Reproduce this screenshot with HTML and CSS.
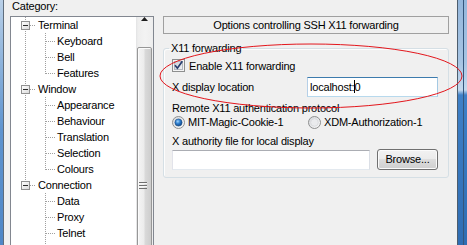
FILE: index.html
```html
<!DOCTYPE html>
<html>
<head>
<meta charset="utf-8">
<title>PuTTY Configuration - X11</title>
<link rel="stylesheet" href="styles.css">
</head>
<body>
<div class="window">
  <div class="edge-left"></div>
  <div class="client">
    <div class="left-col">
      <div class="cat-label">Category:</div>
      <div class="tree">
        <ul class="tree-list">
          <li class="node n-root"><span class="expander"></span><span class="root-label">Terminal</span></li>
          <li class="node n-child">Keyboard</li>
          <li class="node n-child">Bell</li>
          <li class="node n-child-last">Features</li>
          <li class="node n-root"><span class="expander"></span><span class="root-label">Window</span></li>
          <li class="node n-child">Appearance</li>
          <li class="node n-child">Behaviour</li>
          <li class="node n-child">Translation</li>
          <li class="node n-child">Selection</li>
          <li class="node n-child-last">Colours</li>
          <li class="node n-root-last"><span class="expander"></span><span class="root-label">Connection</span></li>
          <li class="node n-child-nr">Data</li>
          <li class="node n-child-nr">Proxy</li>
          <li class="node n-child-nr">Telnet</li>
          <li class="node n-child-nr">Rlogin</li>
        </ul>
        <div class="vscroll">
          <div class="sb-up">
            <svg width="7" height="4" viewBox="0 0 7 4"><path d="M0 4 L3.5 0 L7 4 Z" fill="#1e1e1e"/></svg>
          </div>
          <div class="sb-track">
            <div class="sb-thumb"><div class="sb-grip"></div></div>
          </div>
        </div>
      </div>
    </div>
    <div class="right-col">
      <div class="panel-title">Options controlling SSH X11 forwarding</div>
      <fieldset class="group">
        <legend>X11 forwarding</legend>
        <div class="check-row">
          <svg class="checkbox" width="13" height="13" viewBox="0 0 13 13">
            <defs>
              <linearGradient id="cbg" x1="0" y1="0" x2="1" y2="1">
                <stop offset="0" stop-color="#c9ced6"/>
                <stop offset="1" stop-color="#f4f5f7"/>
              </linearGradient>
            </defs>
            <rect x="0.5" y="0.5" width="12" height="12" fill="#f4f4f4" stroke="#8e8f8f"/>
            <rect x="2.5" y="2.5" width="8" height="8" fill="url(#cbg)" stroke="#b2b7bf"/>
            <path d="M3 6.2 L5.4 9.2 L10.3 2.2" fill="none" stroke="#283d6e" stroke-width="1.7"/>
          </svg>
          <span>Enable X11 forwarding</span>
        </div>
        <div class="field-row">
          <span>X display location</span>
          <div class="textbox focused">localhost:<span class="caret"></span>0</div>
        </div>
        <div class="text-row">Remote X11 authentication protocol</div>
        <div class="radio-row">
          <div class="radio-opt">
            <svg class="radio" width="13" height="13" viewBox="0 0 13 13">
              <defs>
                <linearGradient id="rbg" x1="0" y1="0" x2="1" y2="1">
                  <stop offset="0" stop-color="#d4d6da"/>
                  <stop offset="1" stop-color="#fbfbfb"/>
                </linearGradient>
                <radialGradient id="rdot" cx="0.4" cy="0.35" r="0.7">
                  <stop offset="0" stop-color="#9fd4fb"/>
                  <stop offset="0.45" stop-color="#2f7fd0"/>
                  <stop offset="1" stop-color="#0b3f7c"/>
                </radialGradient>
              </defs>
              <circle cx="6.5" cy="6.5" r="6" fill="url(#rbg)" stroke="#8e8f8f"/>
              <circle cx="6.5" cy="6.5" r="3.6" fill="url(#rdot)" stroke="#1c4f86" stroke-width="0.6"/>
            </svg>
            <span>MIT-Magic-Cookie-1</span>
          </div>
          <div class="radio-opt">
            <svg class="radio" width="13" height="13" viewBox="0 0 13 13">
              <defs>
                <linearGradient id="rbg2" x1="0" y1="0" x2="1" y2="1">
                  <stop offset="0" stop-color="#d4d6da"/>
                  <stop offset="1" stop-color="#fbfbfb"/>
                </linearGradient>
              </defs>
              <circle cx="6.5" cy="6.5" r="6" fill="url(#rbg2)" stroke="#8e8f8f"/>
              <circle cx="6.5" cy="6.5" r="3.8" fill="#eaebed" stroke="#d0d2d5" stroke-width="0.6"/>
            </svg>
            <span>XDM-Authorization-1</span>
          </div>
        </div>
        <div class="text-row second">X authority file for local display</div>
        <div class="file-row">
          <div class="textbox file"></div>
          <div class="button">Browse...</div>
        </div>
      </fieldset>
    </div>
  </div>
  <div class="edge-right"></div>
</div>
<svg class="annotation" width="467" height="245" viewBox="0 0 467 245">
  <ellipse cx="311" cy="76" rx="151" ry="32" fill="none" stroke="#e3161c" stroke-width="1"/>
</svg>
</body>
</html>
```

FILE: styles.css
```css
html, body {
  margin: 0;
  padding: 0;
}

body {
  width: 467px;
  height: 245px;
  overflow: hidden;
  position: relative;
  background: #f0f0f0;
  font-family: "Liberation Sans", Arial, sans-serif;
  font-size: 11px;
  letter-spacing: -0.2px;
  color: #000;
}

.window {
  display: flex;
  height: 245px;
}

.edge-left {
  width: 3px;
  flex: none;
  background: linear-gradient(#b9d0e8 0, #8fb4dc 60px, #5f94cf 130px, #4f87c7 245px);
  border-right: 1px solid #5f6d7c;
}

.client {
  flex: 1;
  display: flex;
  padding-left: 6px;
  min-width: 0;
}

.left-col {
  width: 144px;
  flex: none;
}

.cat-label {
  height: 16px;
  line-height: 13px;
  padding-left: 2px;
}

.tree {
  height: 240px;
  border: 1px solid #828790;
  background: #fff;
  display: flex;
  overflow: hidden;
}

.tree-list {
  flex: 1;
  list-style: none;
  margin: 0;
  padding: 0;
  min-width: 0;
}

.node {
  height: 16px;
  line-height: 16px;
  display: flex;
  align-items: center;
  white-space: nowrap;
}

.n-root {
  background:
    repeating-linear-gradient(to bottom, #a0a0a0 0 1px, transparent 1px 2px) 14px 0 / 1px 16px no-repeat,
    repeating-linear-gradient(to right, #a0a0a0 0 1px, transparent 1px 2px) 19px 8px / 6px 1px no-repeat;
}

.n-root-last {
  background:
    repeating-linear-gradient(to bottom, #a0a0a0 0 1px, transparent 1px 2px) 14px 0 / 1px 8px no-repeat,
    repeating-linear-gradient(to right, #a0a0a0 0 1px, transparent 1px 2px) 19px 8px / 6px 1px no-repeat;
}

.n-child {
  padding-left: 46px;
  background:
    repeating-linear-gradient(to bottom, #a0a0a0 0 1px, transparent 1px 2px) 14px 0 / 1px 16px no-repeat,
    repeating-linear-gradient(to bottom, #a0a0a0 0 1px, transparent 1px 2px) 34px 0 / 1px 16px no-repeat,
    repeating-linear-gradient(to right, #a0a0a0 0 1px, transparent 1px 2px) 35px 8px / 9px 1px no-repeat;
}

.n-child-last {
  padding-left: 46px;
  background:
    repeating-linear-gradient(to bottom, #a0a0a0 0 1px, transparent 1px 2px) 14px 0 / 1px 16px no-repeat,
    repeating-linear-gradient(to bottom, #a0a0a0 0 1px, transparent 1px 2px) 34px 0 / 1px 9px no-repeat,
    repeating-linear-gradient(to right, #a0a0a0 0 1px, transparent 1px 2px) 35px 8px / 9px 1px no-repeat;
}

.n-child-nr {
  padding-left: 46px;
  background:
    repeating-linear-gradient(to bottom, #a0a0a0 0 1px, transparent 1px 2px) 34px 0 / 1px 16px no-repeat,
    repeating-linear-gradient(to right, #a0a0a0 0 1px, transparent 1px 2px) 35px 8px / 9px 1px no-repeat;
}

.expander {
  width: 9px;
  height: 9px;
  box-sizing: border-box;
  margin-left: 10px;
  flex: none;
  border: 1px solid #919191;
  background:
    linear-gradient(#2b2b2b, #2b2b2b) center / 5px 1px no-repeat,
    linear-gradient(135deg, #ffffff, #dcdcdc);
}

.root-label {
  margin-left: 8px;
}

.vscroll {
  width: 17px;
  flex: none;
  display: flex;
  flex-direction: column;
  background: linear-gradient(to right, #e2e3e4 0, #eeeeee 2px, #f3f3f3 9px, #eeeeee 17px);
}

.sb-up {
  height: 17px;
  display: flex;
  align-items: center;
  justify-content: center;
}

.sb-track {
  flex: 1;
  padding-top: 26px;
}

.sb-thumb {
  height: 260px;
  margin: 0 1px;
  box-sizing: border-box;
  border: 1px solid #979797;
  border-radius: 2px;
  background: linear-gradient(to right, #f4f4f4 0, #ececec 45%, #d9d9d9 55%, #cdcdcd 100%);
  box-shadow: inset 1px 1px 0 #fbfbfb;
}

.sb-grip {
  width: 8px;
  height: 7px;
  margin: 134px 0 0 1px;
  background: repeating-linear-gradient(to bottom, #6f6f6f 0 1px, #f7f7f7 1px 2px, transparent 2px 3px);
}

.right-col {
  width: 286px;
  flex: none;
  margin-left: 9px;
}

.panel-title {
  margin-top: 16px;
  height: 16px;
  line-height: 16px;
  border: 1px solid #a0a0a0;
  text-align: center;
}

.group {
  margin: 7px 0 0;
  padding: 2px 10px 7px 8px;
  border: 1px solid #d5dfe5;
  border-radius: 3px;
  min-width: 0;
  box-shadow: inset 1px 1px 0 #fdfdfd;
}

.group legend {
  padding: 0 2px;
  margin-left: -3px;
  line-height: 14px;
}

.check-row {
  display: flex;
  align-items: center;
  gap: 4px;
  height: 17px;
}

.checkbox, .radio {
  flex: none;
  display: block;
}

.field-row {
  display: flex;
  align-items: center;
  justify-content: space-between;
  margin-top: 3px;
  height: 20px;
}

.textbox {
  box-sizing: border-box;
  height: 20px;
  background: #fff;
  border: 1px solid;
  border-color: #abadb3 #dbdfe6 #e3e9ef #e2e3ea;
  line-height: 18px;
  padding-left: 2px;
  white-space: nowrap;
}

.textbox.focused {
  width: 131px;
  border-color: #3d7bad #a4c9e3 #b7d9ed #b5cfe7;
}

.caret {
  display: inline-block;
  width: 1px;
  height: 13px;
  background: #000;
  vertical-align: -2px;
  margin-right: -1px;
}

.text-row {
  margin-top: 4px;
  line-height: 14px;
}

.text-row.second {
  margin-top: 5px;
}

.radio-row {
  display: grid;
  grid-template-columns: 136px auto;
  height: 14px;
}

.radio-opt {
  display: flex;
  align-items: center;
  gap: 3px;
}

.file-row {
  display: flex;
  align-items: flex-end;
  gap: 7px;
  margin-top: 1px;
  height: 21px;
}

.textbox.file {
  width: 198px;
}

.button {
  box-sizing: border-box;
  width: 61px;
  height: 21px;
  border: 1px solid #707070;
  border-radius: 3px;
  background: linear-gradient(#f2f2f2 0%, #ebebeb 50%, #dddddd 50%, #cfcfcf 100%);
  box-shadow: inset 0 0 0 1px #fbfbfb;
  text-align: center;
  line-height: 19px;
}

.edge-right {
  width: 9px;
  flex: none;
  border-left: 1px solid #4d5d6d;
  background:
    linear-gradient(to right, transparent 5px, #35557a 5px, #35557a 6px, transparent 6px),
    linear-gradient(#95b7dc 0, #a6c4e3 62px, #c4d9ee 90px, #3e80c7 95px, #2f6db3 245px);
}

.annotation {
  position: absolute;
  left: 0;
  top: 0;
  pointer-events: none;
}
```
